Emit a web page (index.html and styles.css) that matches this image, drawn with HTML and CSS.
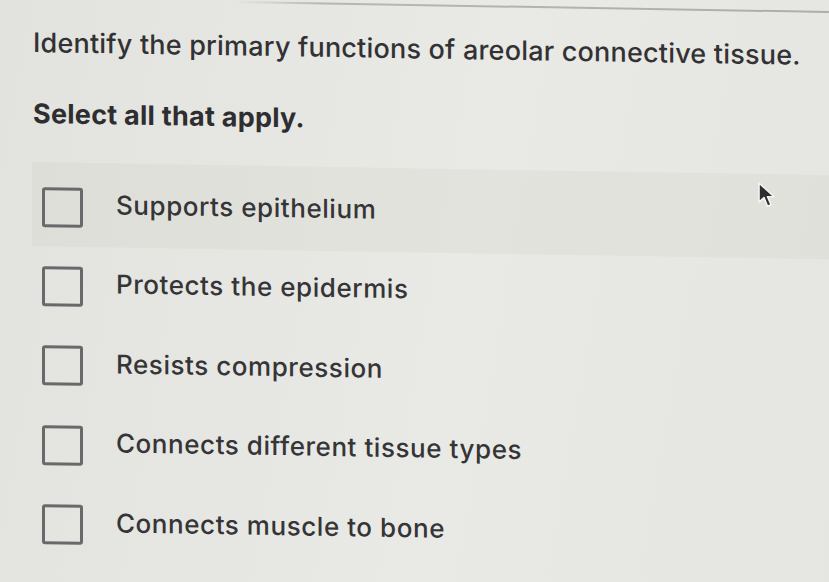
FILE: index.html
```html
<!DOCTYPE html>
<html lang="en">
<head>
    <meta charset="UTF-8">
    <title>Question</title>
    <link rel="stylesheet" href="styles.css">
</head>
<body>
    <div class="top-rule"></div>

    <div class="question">
        <h1 class="question-text">Identify the primary functions of areolar connective tissue.</h1>
        <p class="prompt">Select all that apply.</p>

        <ul class="options">
            <li class="option option-hover">
                <span class="box"></span>
                <span class="label">Supports epithelium</span>
                <!-- mouse pointer over the hovered row -->
                <svg class="pointer" width="20" height="28" viewBox="0 0 20 28">
                    <path d="M2 2 L2 21 L7 16.5 L10.5 25 L14 23.5 L10.5 15.5 L17 15.5 Z" fill="#2e2e30" stroke="#f4f4f2" stroke-width="1.6" stroke-linejoin="round"/>
                </svg>
            </li>
            <li class="option">
                <span class="box"></span>
                <span class="label">Protects the epidermis</span>
            </li>
            <li class="option">
                <span class="box"></span>
                <span class="label">Resists compression</span>
            </li>
            <li class="option">
                <span class="box"></span>
                <span class="label">Connects different tissue types</span>
            </li>
            <li class="option">
                <span class="box"></span>
                <span class="label">Connects muscle to bone</span>
            </li>
        </ul>
    </div>
</body>
</html>
```

FILE: styles.css
```css
/* Reset */
* {
    margin: 0;
    padding: 0;
    box-sizing: border-box;
}

body {
    font-family: 'Inter', 'Liberation Sans', sans-serif;
    background: linear-gradient(100deg, #e2e2de 0%, #e9e9e5 55%, #e5e5e1 100%);
    color: #333335;
    width: 829px;
    height: 582px;
    overflow: hidden;
    position: relative;
}

/* Linea gris superior (ligeramente inclinada en la foto) */
.top-rule {
    height: 2px;
    margin-top: 1px;
    margin-left: 233px;
    margin-bottom: 4px;
    background: linear-gradient(90deg, rgba(170,170,168,0), #b6b6b4 15%, #adadab);
    transform-origin: left center;
    transform: rotate(0.96deg);
}

/* La foto esta un poco inclinada: las lineas bajan hacia la derecha */
.question {
    padding: 19px 0 0 33px;
    transform-origin: 33px 0;
    transform: skewY(0.95deg);
}

.question-text {
    font-size: 27px;
    font-weight: 500;
    letter-spacing: 0.2px;
    line-height: 33px;
    color: #323234;
}

.prompt {
    margin-top: 38px;
    font-size: 27px;
    font-weight: 700;
    letter-spacing: 0.25px;
    line-height: 33px;
    color: #2e2e30;
}

/* Lista de opciones */
.options {
    list-style: none;
    margin-top: 32px;
    margin-left: -1px;
}

.option {
    position: relative;
    display: flex;
    align-items: center;
    gap: 33px;
    height: 79.5px;
    padding-left: 10px;
}

.option-hover {
    height: 84px;
    padding-top: 5px;
    background: rgba(196, 196, 186, 0.16);
}

.box {
    width: 41px;
    height: 40px;
    border: 3px solid #69696b;
    border-radius: 3px;
    flex-shrink: 0;
}

.label {
    font-size: 26px;
    font-weight: 500;
    letter-spacing: 0.55px;
    padding-bottom: 6px;
    color: #353537;
}

.pointer {
    position: absolute;
    left: 725px;
    top: 7px;
}
```
